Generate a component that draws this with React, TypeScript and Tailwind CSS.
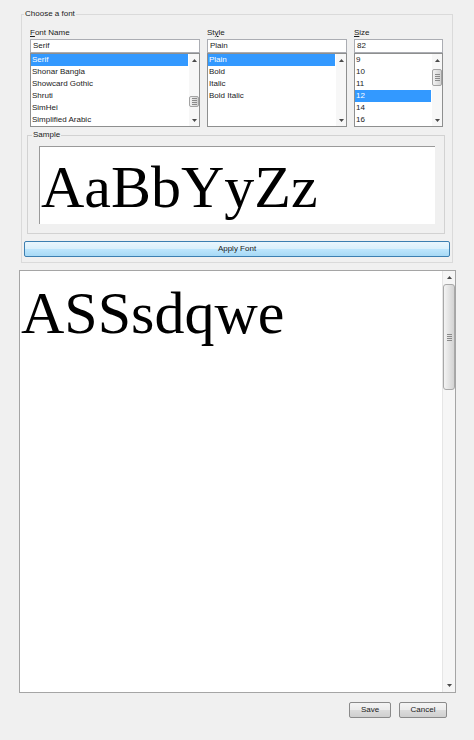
import React from "react";

function Arrow({ dir }: { dir: "up" | "down" }) {
  return (
    <svg width="5" height="3" viewBox="0 0 5 3">
      <path d={dir === "up" ? "M0 3L2.5 0L5 3Z" : "M0 0L2.5 3L5 0Z"} fill="#4a4a4a" />
    </svg>
  );
}

function Grip() {
  return (
    <div className="flex flex-col items-center gap-[1px]">
      <div className="h-[1px] w-[5px] bg-[#8a8a8a]" />
      <div className="h-[1px] w-[5px] bg-[#8a8a8a]" />
      <div className="h-[1px] w-[5px] bg-[#8a8a8a]" />
      <div className="h-[1px] w-[5px] bg-[#8a8a8a]" />
    </div>
  );
}

function SmallScroll({ thumbTop, thumbH }: { thumbTop?: number; thumbH?: number }) {
  return (
    <div className="flex w-[10px] flex-col bg-[#f7f7f7]">
      <div className="flex h-[12px] items-center justify-center">
        <Arrow dir="up" />
      </div>
      <div className="flex-1">
        {thumbH ? (
          <div
            className="flex items-center justify-center rounded-[2px] border border-[#a3a3a3] bg-[linear-gradient(90deg,#f2f2f2,#e2e2e2_50%,#d2d2d2)]"
            style={{ marginTop: thumbTop, height: thumbH }}
          >
            <Grip />
          </div>
        ) : null}
      </div>
      <div className="flex h-[12px] items-center justify-center">
        <Arrow dir="down" />
      </div>
    </div>
  );
}

function ListBox({
  items,
  selected,
  thumbTop,
  thumbH,
}: {
  items: string[];
  selected: number;
  thumbTop?: number;
  thumbH?: number;
}) {
  return (
    <div className="flex h-[74px] border border-[#8e8f8f] bg-white">
      <div className="mr-[1px] flex-1 overflow-hidden">
        {items.map((it, i) => (
          <div
            key={it}
            className={
              i === selected
                ? "h-[12px] bg-[#3399ff] pl-[1px] text-[8px] leading-[12px] text-white"
                : "h-[12px] pl-[1px] text-[8px] leading-[12px] text-[#1a1a1a]"
            }
          >
            {it}
          </div>
        ))}
      </div>
      <SmallScroll thumbTop={thumbTop} thumbH={thumbH} />
    </div>
  );
}

function Field({ value }: { value: string }) {
  return (
    <div className="h-[14px] border border-[#abadb3] bg-white pl-[2px] text-[8px] leading-[12px] text-[#1a1a1a]">
      {value}
    </div>
  );
}

function Column({
  label,
  width,
  value,
  items,
  selected,
  thumbTop,
  thumbH,
}: {
  label: React.ReactNode;
  width: string;
  value: string;
  items: string[];
  selected: number;
  thumbTop?: number;
  thumbH?: number;
}) {
  return (
    <div className={width}>
      <div className="mb-[1px] h-[10px] text-[8px] leading-[10px] text-[#1a1a1a]">{label}</div>
      <Field value={value} />
      <ListBox items={items} selected={selected} thumbTop={thumbTop} thumbH={thumbH} />
    </div>
  );
}

function WinButton({ children, width }: { children: React.ReactNode; width: string }) {
  return (
    <div
      className={`${width} flex h-[16px] items-center justify-center rounded-[2px] border border-[#8a8a8a] bg-[linear-gradient(#f4f4f4,#ebebeb_50%,#dddddd_50%,#cfcfcf)] text-[8px] text-[#1a1a1a]`}
    >
      {children}
    </div>
  );
}

export default function App() {
  return (
    <div className="h-[740px] w-[474px] overflow-hidden bg-[#f0f0f0] pt-[9px] font-['Liberation_Sans',Arial,sans-serif]">
      <fieldset className="mx-[21px] w-[432px] border border-[#dadada] pb-[5px]">
        <legend className="ml-[2px] px-[1px] text-[8px] leading-[10px] text-[#1a1a1a]">Choose a font</legend>
        <div className="ml-[8px] mt-[9px] flex gap-[7px]">
          <Column
            width="w-[170px]"
            label={
              <span>
                <span className="underline">F</span>ont Name
              </span>
            }
            value="Serif"
            items={["Serif", "Shonar Bangla", "Showcard Gothic", "Shruti", "SimHei", "Simplified Arabic"]}
            selected={0}
            thumbTop={30}
            thumbH={11}
          />
          <Column
            width="w-[140px]"
            label={
              <span>
                St<span className="underline">y</span>le
              </span>
            }
            value="Plain"
            items={["Plain", "Bold", "Italic", "Bold Italic"]}
            selected={0}
          />
          <Column
            width="w-[89px]"
            label={
              <span>
                <span className="underline">S</span>ize
              </span>
            }
            value="82"
            items={["9", "10", "11", "12", "14", "16"]}
            selected={3}
            thumbTop={3}
            thumbH={17}
          />
        </div>
        <fieldset className="ml-[5px] mt-[3px] w-[418px] border border-[#d2d2d2] pb-[9px]">
          <legend className="ml-[4px] px-[1px] text-[8px] leading-[10px] text-[#1a1a1a]">Sample</legend>
          <div className="ml-[11px] mt-[6px] h-[78px] w-[396px] overflow-hidden border-l border-t border-[#9a9a9a] bg-white pl-[1px] pt-[10px] font-['Liberation_Serif','Times_New_Roman',serif] text-[60px] leading-[60px] text-black">
            AaBbYyZz
          </div>
        </fieldset>
        <div className="ml-[2px] mt-[7px] flex h-[16px] w-[426px] items-center justify-center rounded-[2px] border border-[#3c7fb1] bg-[linear-gradient(#eaf6fd,#d9f0fc_50%,#bee6fd_50%,#a7d9f5)] text-[8px] text-[#1a1a1a]">
          Apply Font
        </div>
      </fieldset>
      <div className="ml-[19px] mt-[7px] flex h-[423px] w-[437px] border border-[#a5a5a5] bg-white">
        <div className="flex-1 pl-[1px] pt-[12px] font-['Liberation_Serif','Times_New_Roman',serif] text-[60px] leading-[60px] text-black">
          ASSsdqwe
        </div>
        <div className="flex w-[13px] flex-col border-l border-[#e6e6e6] bg-[#f6f6f6]">
          <div className="flex h-[13px] items-center justify-center">
            <Arrow dir="up" />
          </div>
          <div className="flex h-[106px] items-center justify-center rounded-[3px] border border-[#a8a8a8] bg-[linear-gradient(90deg,#f3f3f3,#e3e3e3_50%,#d3d3d3)]">
            <Grip />
          </div>
          <div className="flex-1" />
          <div className="flex h-[13px] items-center justify-center">
            <Arrow dir="down" />
          </div>
        </div>
      </div>
      <div className="mt-[9px] flex justify-end gap-[8px] pr-[27px]">
        <WinButton width="w-[42px]">Save</WinButton>
        <WinButton width="w-[48px]">Cancel</WinButton>
      </div>
    </div>
  );
}
